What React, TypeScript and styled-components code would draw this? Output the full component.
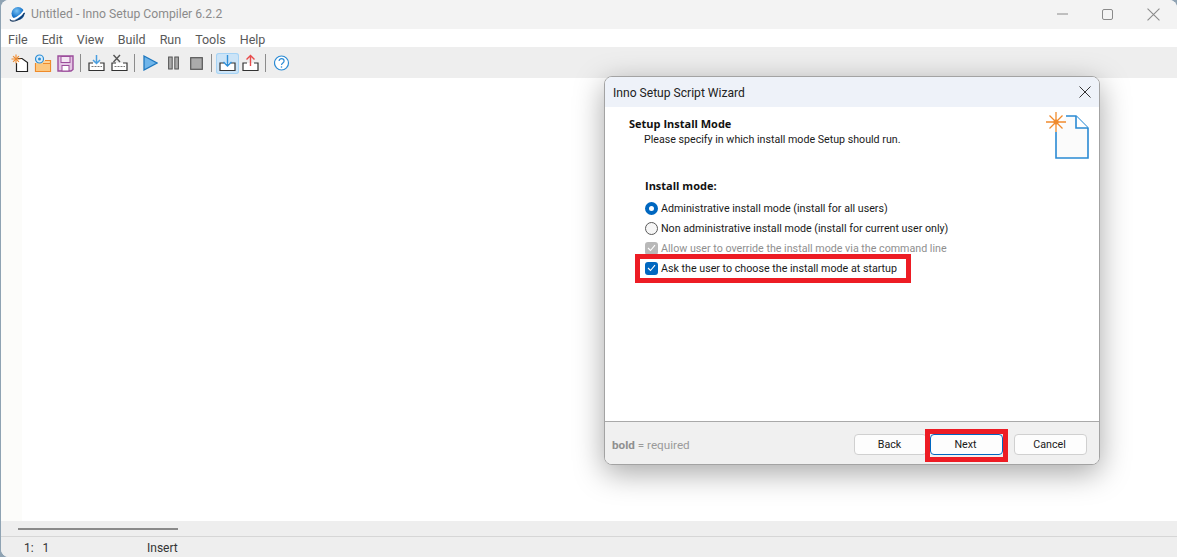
import React from "react";
import styled, { createGlobalStyle } from "styled-components";

const Global = createGlobalStyle`
  html, body { margin: 0; padding: 0; height: 100%; background: #8fa3b3; overflow: hidden; }
  #root { height: 100%; }
  * { box-sizing: border-box; }
`;

const Win = styled.div`
  position: relative;
  width: 1176px;
  margin-left: 1px;
  height: 557px;
  background: #fff;
  border-radius: 8px 8px 0 8px;
  overflow: hidden;
  display: flex;
  flex-direction: column;
  font-family: Roboto, "Liberation Sans", sans-serif;
  font-size: 12px;
  color: #222;
`;
const TitleBar = styled.div`
  height: 29px;
  flex: none;
  background: #f3f3f3;
  display: flex;
  align-items: center;
  padding: 0 0 1px 8px;
`;
const AppTitle = styled.span`
  margin-left: 5px;
  color: #8b8b8b;
  font-size: 12.2px;
`;
const WinControls = styled.div`
  margin-left: auto;
  display: flex;
  align-items: center;
  gap: 34px;
  padding-right: 17px;
`;
const MenuBar = styled.div`
  height: 18px;
  flex: none;
  display: flex;
  align-items: center;
  gap: 14px;
  padding: 2px 0 0 7px;
  color: #595959;
  font-size: 12.5px;
`;
const Toolbar = styled.div`
  height: 31px;
  flex: none;
  background: #eeeeee;
  display: flex;
  align-items: center;
  padding: 1px 0 0 7px;
`;
const ToolBtn = styled.div<{ $on?: boolean }>`
  width: 23px;
  height: 21px;
  display: flex;
  align-items: center;
  justify-content: center;
  border-radius: 3px;
  background: ${(p) => (p.$on ? "#cce4f7" : "transparent")};
  box-shadow: ${(p) => (p.$on ? "inset 0 0 0 1px #a6d3f5" : "none")};
`;
const Sep = styled.div`
  width: 1px;
  height: 18px;
  background: #8c8c8c;
  margin: 0 4px 0 3px;
`;
const Editor = styled.div`
  flex: 1;
  display: flex;
  background: #fff;
`;
const Gutter = styled.div`
  width: 21px;
  background: #fcfcfa;
`;
const ScrollRow = styled.div`
  height: 16px;
  flex: none;
  background: #eeeeee;
  padding: 7px 0 0 17px;
  border-bottom: 1px solid #d6d6d6;
`;
const Thumb = styled.div`
  width: 160px;
  height: 2px;
  background: #8a8a8a;
`;
const StatusBar = styled.div`
  height: 20px;
  flex: none;
  background: #eeeeee;
  display: flex;
  align-items: center;
  padding-top: 1px;
  color: #333;
  font-size: 12px;
`;
const StatusPos = styled.span`
  width: 146px;
  padding-left: 23px;
  white-space: pre;
`;

const Dialog = styled.div`
  position: absolute;
  left: 603px;
  top: 76px;
  width: 496px;
  height: 389px;
  background: #fff;
  border: 1px solid #a3a3a3;
  border-radius: 8px;
  box-shadow: 0 8px 30px rgba(0, 0, 0, 0.35);
  display: flex;
  flex-direction: column;
  overflow: hidden;
`;
const DlgTitle = styled.div`
  height: 30px;
  flex: none;
  background: #eef2f9;
  display: flex;
  align-items: center;
  justify-content: space-between;
  padding: 0 8px;
  font-size: 12.1px;
  color: #222;
`;
const DlgTitleText = styled.span`
  padding-top: 2px;
`;
const DlgBody = styled.div`
  flex: 1;
  position: relative;
  padding: 9px 0 0 24px;
`;
const HeadIcon = styled.div`
  position: absolute;
  right: 10px;
  top: 3px;
`;
const Heading = styled.div`
  font-family: "Open Sans", Roboto, sans-serif;
  font-weight: 700;
  font-size: 11px;
  line-height: 16px;
  color: #111;
`;
const Sub = styled.div`
  padding-left: 15px;
  line-height: 16px;
  color: #1a1a1a;
  font-size: 10.67px;
`;
const Group = styled.div`
  margin: 30px 0 0 16px;
  display: flex;
  flex-direction: column;
`;
const GroupLabel = styled.div`
  font-family: "Open Sans", Roboto, sans-serif;
  font-weight: 700;
  font-size: 11px;
  line-height: 16px;
  margin-bottom: 4px;
  color: #111;
`;
const OptRow = styled.div<{ $off?: boolean }>`
  position: relative;
  height: 20px;
  display: flex;
  align-items: center;
  gap: 3px;
  font-size: 10.7px;
  color: ${(p) => (p.$off ? "#8f8f8f" : "#1a1a1a")};
`;
const Radio = styled.span<{ $on?: boolean }>`
  width: 13px;
  height: 13px;
  border-radius: 50%;
  flex: none;
  background: ${(p) => (p.$on ? "#fff" : "#f6f6f6")};
  border: ${(p) => (p.$on ? "4px solid #0067c0" : "1px solid #5a5a5a")};
`;
const Check = styled.span<{ $off?: boolean }>`
  width: 13px;
  height: 13px;
  border-radius: 3px;
  flex: none;
  background: ${(p) => (p.$off ? "#b8b8b8" : "#0067c0")};
  display: flex;
  align-items: center;
  justify-content: center;
`;
const RedFrame = styled.div`
  position: absolute;
  border: 5px solid #ed1c24;
  pointer-events: none;
`;
const RowFrame = styled(RedFrame)`
  left: -10px;
  right: -26px;
  top: -4px;
  bottom: -5px;
`;
const RowWrap = styled.div`
  position: relative;
  width: 240px;
  white-space: nowrap;
`;
const Footer = styled.div`
  height: 43px;
  flex: none;
  background: #f0f0f0;
  border-top: 1px solid #a9a9a9;
  display: flex;
  align-items: center;
  padding: 3px 12px 0 7px;
`;
const Hint = styled.span`
  color: #9a9a9a;
  font-size: 11.7px;
  margin: 1px auto 0 0;
  & b { color: #8f8f8f; }
`;
const BtnWrap = styled.div<{ $gap?: number }>`
  position: relative;
  margin-left: ${(p) => p.$gap || 0}px;
`;
const Btn = styled.div<{ $def?: boolean }>`
  width: 73px;
  height: 21px;
  border-radius: 4px;
  background: #fdfdfd;
  border: 1px solid ${(p) => (p.$def ? "#0067c0" : "#d0d0d0")};
  display: flex;
  align-items: center;
  justify-content: center;
  padding-right: 2px;
  font-size: 10.7px;
  color: #1a1a1a;
`;
const BtnFrame = styled(RedFrame)`
  left: -5px;
  right: -5px;
  top: -5px;
  bottom: -7px;
`;

const Globe = () => (
  <svg width="17" height="17" viewBox="0 0 17 17">
    <defs>
      <radialGradient id="g" cx="0.4" cy="0.3" r="0.8">
        <stop offset="0" stopColor="#7cc4f5" />
        <stop offset="0.6" stopColor="#1673c9" />
        <stop offset="1" stopColor="#0b3f86" />
      </radialGradient>
    </defs>
    <circle cx="9" cy="7.5" r="6.5" fill="url(#g)" />
    <path d="M1 12.5C5 14 11 11.5 16 4" fill="none" stroke="#fff" strokeWidth="2" />
    <path d="M1 13.5C2 16 10 16.5 15.5 7" fill="none" stroke="#14365e" strokeWidth="1.2" />
  </svg>
);
const Spark = ({ x, y, r }: { x: number; y: number; r: number }) => (
  <g stroke="#f08a2c" strokeWidth={r > 6 ? 1.3 : 1.1}>
    <line x1={x - r} y1={y} x2={x + r} y2={y} />
    <line x1={x} y1={y - r} x2={x} y2={y + r} />
    <line x1={x - r * 0.65} y1={y - r * 0.65} x2={x + r * 0.65} y2={y + r * 0.65} />
    <line x1={x - r * 0.65} y1={y + r * 0.65} x2={x + r * 0.65} y2={y - r * 0.65} />
    <circle cx={x} cy={y} r={r * 0.25} fill="#f08a2c" stroke="none" />
  </g>
);
const NewIcon = () => (
  <svg width="18" height="19" viewBox="0 0 18 19">
    <path d="M6.5 4.5H11L16.5 8.5V17.5H5.5V9" fill="#fff" stroke="#222" strokeWidth="1.2" />
    <Spark x={5} y={5} r={4.5} />
  </svg>
);
const OpenIcon = () => (
  <svg width="18" height="19" viewBox="0 0 18 19">
    <path d="M1.5 9V17.5H16.5V6.5H11" fill="#fbd39a" stroke="#ee8a2a" strokeWidth="1.2" />
    <path d="M9 9.5H16.5V17.5H1.5V10" fill="#fcc77f" stroke="#ee8a2a" strokeWidth="1" />
    <circle cx="5.5" cy="5" r="4" fill="#d8ecfa" stroke="#2e8fd6" strokeWidth="1.2" />
    <circle cx="5.5" cy="5" r="1.5" fill="#2e8fd6" />
  </svg>
);
const SaveIcon = () => (
  <svg width="17" height="17" viewBox="0 0 17 17">
    <path d="M1 1H16V14.5L14 16H1Z" fill="#e3c5e3" stroke="#9b4c9b" strokeWidth="1.4" />
    <rect x="4" y="1.5" width="9" height="6" fill="#f3e6f3" stroke="#9b4c9b" />
    <rect x="5" y="10.5" width="7" height="5.5" fill="#fff" stroke="#9b4c9b" />
  </svg>
);
const Tray = ({ dashes }: { dashes?: boolean }) => (
  <>
    <path d="M5 9H1V16.5H16V9H12" fill="#fff" stroke="#333" strokeWidth="1.2" />
    {dashes && <line x1="3.5" y1="12.5" x2="14" y2="12.5" stroke="#777" strokeDasharray="2 1" />}
  </>
);
const CompileIcon = () => (
  <svg width="17" height="18" viewBox="0 0 17 18">
    <Tray dashes />
    <path d="M8.5 1V9M5 6L8.5 9.5L12 6" fill="none" stroke="#4a9fe0" strokeWidth="1.5" />
  </svg>
);
const CancelIcon = () => (
  <svg width="17" height="18" viewBox="0 0 17 18">
    <Tray dashes />
    <path d="M2.5 1L9 8M9 1L2.5 8" fill="none" stroke="#555" strokeWidth="1.4" />
  </svg>
);
const PlayIcon = () => (
  <svg width="15" height="16" viewBox="0 0 15 16">
    <path d="M1 1L14 8L1 15Z" fill="#6fb5ea" stroke="#1f78bf" strokeWidth="1.3" />
  </svg>
);
const PauseIcon = () => (
  <svg width="11" height="14" viewBox="0 0 11 14">
    <rect x="0.6" y="1" width="3.6" height="12" fill="#aaa" stroke="#555" />
    <rect x="6.8" y="1" width="3.6" height="12" fill="#aaa" stroke="#555" />
  </svg>
);
const StopIcon = () => (
  <svg width="13" height="13" viewBox="0 0 13 13">
    <rect x="0.7" y="0.7" width="11.6" height="11.6" fill="#aaa" stroke="#555" strokeWidth="1.2" />
  </svg>
);
const DownIcon = () => (
  <svg width="17" height="18" viewBox="0 0 17 18">
    <Tray />
    <path d="M8.5 1V12M4.5 8L8.5 12L12.5 8" fill="none" stroke="#2f8fd8" strokeWidth="1.4" />
  </svg>
);
const UpIcon = () => (
  <svg width="17" height="18" viewBox="0 0 17 18">
    <Tray />
    <path d="M8.5 12V1.5M4.5 5.5L8.5 1.5L12.5 5.5" fill="none" stroke="#e84a4a" strokeWidth="1.4" />
  </svg>
);
const HelpIcon = () => (
  <svg width="16" height="16" viewBox="0 0 16 16">
    <circle cx="7.5" cy="8" r="7" fill="#fff" stroke="#2a8ad4" strokeWidth="1.2" />
    <path d="M5.1 6C5.1 2.8 10.1 3 10.1 6C10.1 8 7.5 7.8 7.5 10" fill="none" stroke="#2a8ad4" strokeWidth="1.2" />
    <circle cx="7.5" cy="12" r="0.8" fill="#2a8ad4" />
  </svg>
);
const Tick = () => (
  <svg width="9" height="8" viewBox="0 0 9 8">
    <path d="M1 4L3.5 6.5L8 1.2" fill="none" stroke="#fff" strokeWidth="1.1" />
  </svg>
);
const X = ({ c, s }: { c: string; s: number }) => (
  <svg width={s} height={s} viewBox="0 0 12 12">
    <path d="M0.5 0.5L11.5 11.5M11.5 0.5L0.5 11.5" stroke={c} strokeWidth="1" />
  </svg>
);
const BigDoc = () => (
  <svg width="44" height="50" viewBox="0 0 44 50">
    <path d="M21 6H31L43 18V48H11V22" fill="#fbfbfb" stroke="#2a8ad4" strokeWidth="1.6" />
    <path d="M31 6V18H43" fill="#fff" stroke="#2a8ad4" strokeWidth="1.6" />
    <Spark x={11} y={12} r={10} />
  </svg>
);

export default function App() {
  return (
    <Win>
      <Global />
      <TitleBar>
        <Globe />
        <AppTitle>Untitled - Inno Setup Compiler 6.2.2</AppTitle>
        <WinControls>
          <svg width="11" height="2" viewBox="0 0 11 2"><line x1="0" y1="1" x2="11" y2="1" stroke="#8a8a8a" /></svg>
          <svg width="11" height="11" viewBox="0 0 11 11"><rect x="0.5" y="0.5" width="10" height="10" rx="1.5" fill="none" stroke="#8a8a8a" /></svg>
          <X c="#8a8a8a" s={13} />
        </WinControls>
      </TitleBar>
      <MenuBar>
        {["File", "Edit", "View", "Build", "Run", "Tools", "Help"].map((m) => (
          <span key={m}>{m}</span>
        ))}
      </MenuBar>
      <Toolbar>
        <ToolBtn><NewIcon /></ToolBtn>
        <ToolBtn><OpenIcon /></ToolBtn>
        <ToolBtn><SaveIcon /></ToolBtn>
        <Sep />
        <ToolBtn><CompileIcon /></ToolBtn>
        <ToolBtn><CancelIcon /></ToolBtn>
        <Sep />
        <ToolBtn><PlayIcon /></ToolBtn>
        <ToolBtn><PauseIcon /></ToolBtn>
        <ToolBtn><StopIcon /></ToolBtn>
        <Sep />
        <ToolBtn $on><DownIcon /></ToolBtn>
        <ToolBtn><UpIcon /></ToolBtn>
        <Sep />
        <ToolBtn><HelpIcon /></ToolBtn>
      </Toolbar>
      <Editor><Gutter /></Editor>
      <ScrollRow><Thumb /></ScrollRow>
      <StatusBar>
        <StatusPos>{"1:   1"}</StatusPos>
        <span>Insert</span>
      </StatusBar>
      <Dialog>
        <DlgTitle>
          <DlgTitleText>Inno Setup Script Wizard</DlgTitleText>
          <X c="#333" s={12} />
        </DlgTitle>
        <DlgBody>
          <HeadIcon><BigDoc /></HeadIcon>
          <Heading>Setup Install Mode</Heading>
          <Sub>Please specify in which install mode Setup should run.</Sub>
          <Group>
            <GroupLabel>Install mode:</GroupLabel>
            <OptRow><Radio $on />Administrative install mode (install for all users)</OptRow>
            <OptRow><Radio />Non administrative install mode (install for current user only)</OptRow>
            <OptRow $off><Check $off><Tick /></Check>Allow user to override the install mode via the command line</OptRow>
            <RowWrap>
              <OptRow><Check><Tick /></Check>Ask the user to choose the install mode at startup</OptRow>
              <RowFrame />
            </RowWrap>
          </Group>
        </DlgBody>
        <Footer>
          <Hint><b>bold</b> = required</Hint>
          <BtnWrap><Btn>Back</Btn></BtnWrap>
          <BtnWrap $gap={3}><Btn $def>Next</Btn><BtnFrame /></BtnWrap>
          <BtnWrap $gap={11}><Btn>Cancel</Btn></BtnWrap>
        </Footer>
      </Dialog>
    </Win>
  );
}
